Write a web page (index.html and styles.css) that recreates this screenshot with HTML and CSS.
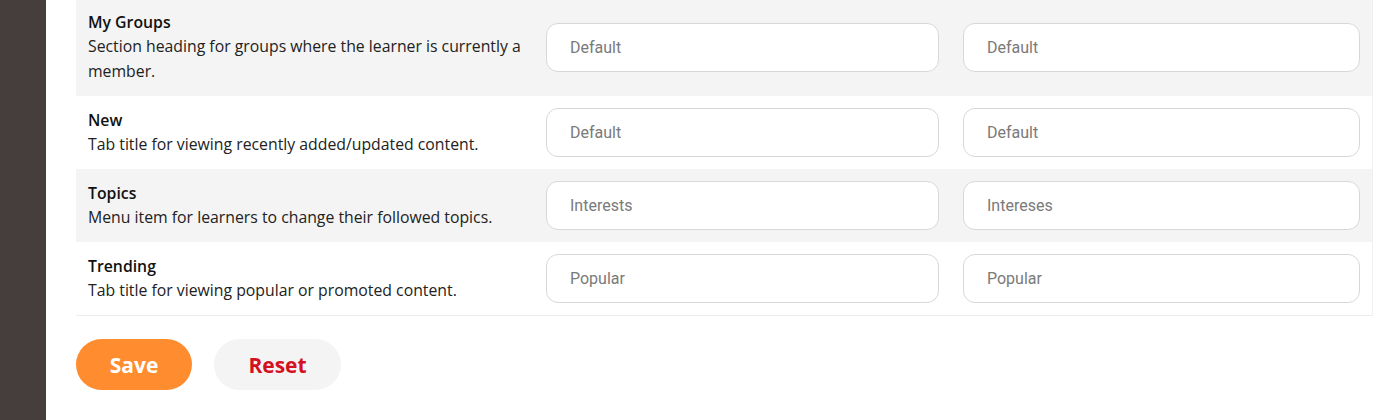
FILE: index.html
```html
<!DOCTYPE html>
<html lang="en">
<head>
<meta charset="utf-8">
<title>Labels</title>
<link rel="stylesheet" href="styles.css">
</head>
<body>
<div class="layout">
  <aside class="sidebar"></aside>
  <main class="main">
    <div class="table">
      <div class="row row-alt row-first">
        <div class="cell cell-text">
          <div class="title">My Groups</div>
          <div class="desc">Section heading for groups where the learner is currently a member.</div>
        </div>
        <div class="cell"><input class="field" type="text" placeholder="Default"></div>
        <div class="cell"><input class="field" type="text" placeholder="Default"></div>
      </div>
      <div class="row">
        <div class="cell cell-text">
          <div class="title">New</div>
          <div class="desc">Tab title for viewing recently added/updated content.</div>
        </div>
        <div class="cell"><input class="field" type="text" placeholder="Default"></div>
        <div class="cell"><input class="field" type="text" placeholder="Default"></div>
      </div>
      <div class="row row-alt">
        <div class="cell cell-text">
          <div class="title">Topics</div>
          <div class="desc">Menu item for learners to change their followed topics.</div>
        </div>
        <div class="cell"><input class="field" type="text" placeholder="Interests"></div>
        <div class="cell"><input class="field" type="text" placeholder="Intereses"></div>
      </div>
      <div class="row">
        <div class="cell cell-text">
          <div class="title">Trending</div>
          <div class="desc">Tab title for viewing popular or promoted content.</div>
        </div>
        <div class="cell"><input class="field" type="text" placeholder="Popular"></div>
        <div class="cell"><input class="field" type="text" placeholder="Popular"></div>
      </div>
    </div>
    <div class="actions">
      <button class="btn btn-save" type="button">Save</button>
      <button class="btn btn-reset" type="button">Reset</button>
    </div>
  </main>
</div>
</body>
</html>
```

FILE: styles.css
```css
* { box-sizing: border-box; }
html, body { margin: 0; padding: 0; background: #fff; }
body {
  font-family: "Open Sans", "Liberation Sans", sans-serif;
  color: #1a1a1a;
  overflow: hidden;
  height: 420px;
}
.layout { display: flex; height: 420px; }
.sidebar { width: 46px; flex: none; background: #463e3c; }
.main { flex: 1; padding: 0 2px 0 30px; }
.table {
  border-bottom: 1px solid #ececec;
  border-right: 1px solid #f0f0f0;
}
.row {
  display: grid;
  grid-template-columns: 458px 417px 1fr;
  align-items: center;
  background: #fff;
}
.row-alt { background: #f4f4f4; }
.row-first { margin-top: -2px; }
.cell { padding: 12px; }
.title { font-size: 15.8px; font-weight: 600; line-height: 24px; color: #111; }
.desc { font-size: 15.8px; line-height: 25px; color: #222; }
.field {
  display: block;
  width: 100%;
  height: 49px;
  border: 1px solid #d8d8d8;
  border-radius: 12px;
  background: #fff;
  padding: 0 23px;
  font-family: Roboto, "Liberation Sans", sans-serif;
  font-size: 16px;
  color: #333;
  outline: none;
}
.field::placeholder { color: #7a7a7a; }
.actions { display: flex; gap: 22px; margin-top: 23px; }
.btn {
  height: 51px;
  border: none;
  border-radius: 26px;
  font-family: inherit;
  font-size: 21px;
  font-weight: 700;
  cursor: pointer;
}
.btn-save { width: 116px; background: #ff8c2f; color: #fff; }
.btn-reset { width: 127px; background: #f4f4f4; color: #d4111f; }
```
